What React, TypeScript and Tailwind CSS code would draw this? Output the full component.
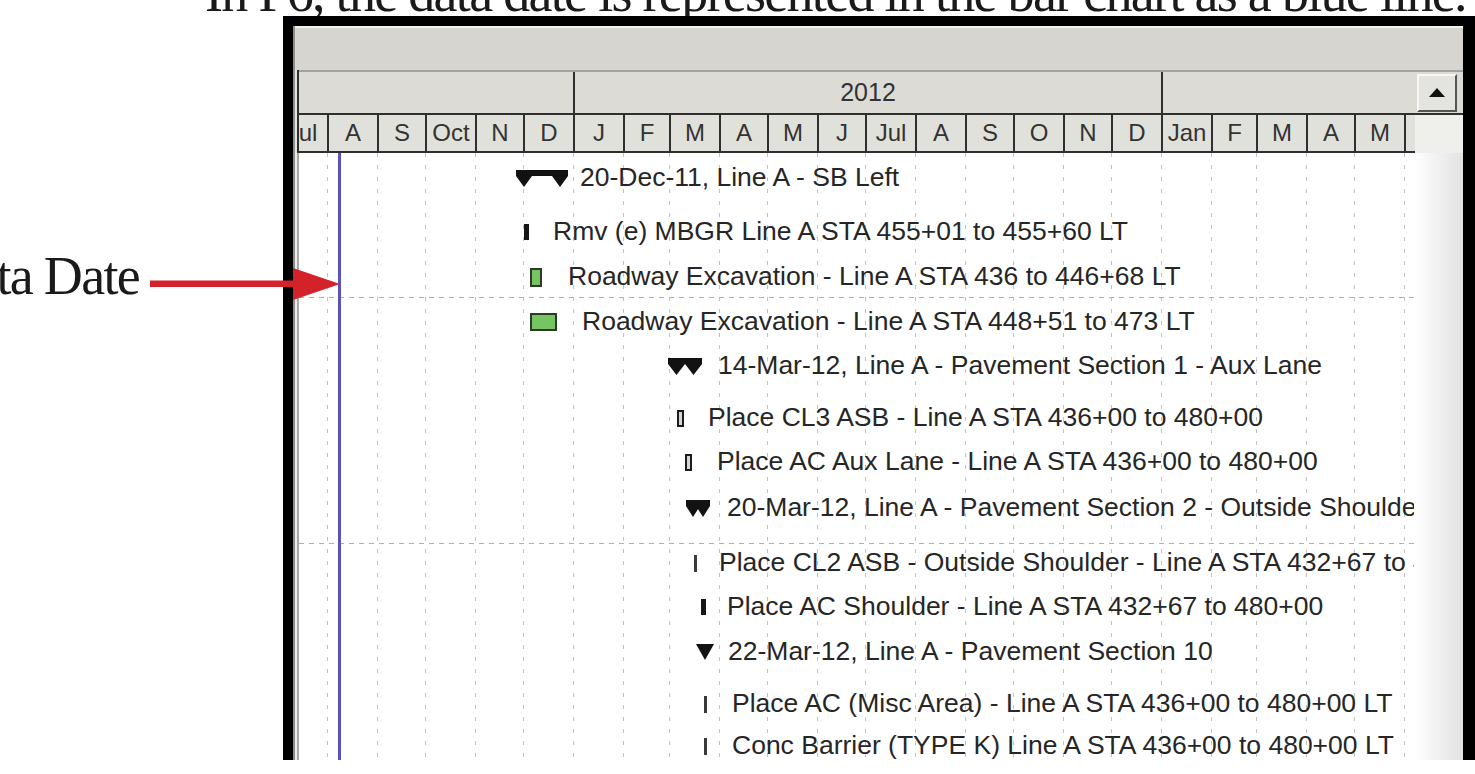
import React from "react";

// timescale: one day in pixels (Jan 1 2012 -> Jan 1 2013 spans 588px)
const DAY = 588 / 366;

const MONTHS: [string, number][] = [
  ["Jul", 31], ["A", 31], ["S", 30], ["Oct", 31], ["N", 30], ["D", 31],
  ["J", 31], ["F", 29], ["M", 31], ["A", 30], ["M", 31], ["J", 30],
  ["Jul", 31], ["A", 31], ["S", 30], ["O", 31], ["N", 30], ["D", 31],
  ["Jan", 31], ["F", 28], ["M", 31], ["A", 30], ["M", 31],
];

// chart-relative month edges, the first month (Jul 11) only shows its tail
const edges: number[] = [0];
let acc = 30.2;
edges.push(Math.round(acc));
for (let i = 1; i < MONTHS.length; i++) {
  acc += MONTHS[i][1] * DAY;
  edges.push(Math.round(acc));
}

const CHART_LEFT = 299;

type Kind = "summary" | "tri" | "bar" | "outline" | "green" | "thin";

interface Row {
  x: number;
  w: number;
  t?: number;
  h?: number;
  kind: Kind;
  tx: number;
  mt: string;
  text: string;
}

const ROWS: Row[] = [
  { x: 516, w: 52, t: 16, kind: "summary", tx: 580, mt: "mt-[4px]", text: "20-Dec-11, Line A - SB Left" },
  { x: 524, w: 5, kind: "bar", tx: 553, mt: "mt-[12px]", text: "Rmv (e) MBGR Line A STA 455+01 to 455+60 LT" },
  { x: 530, w: 12, h: 19, kind: "green", tx: 568, mt: "mt-[3px]", text: "Roadway Excavation - Line A STA 436 to 446+68 LT" },
  { x: 530, w: 27, h: 18, kind: "green", tx: 582, mt: "mt-[3px]", text: "Roadway Excavation - Line A STA 448+51 to 473 LT" },
  { x: 668, w: 34, t: 17, kind: "summary", tx: 718, mt: "mt-[2px]", text: "14-Mar-12, Line A - Pavement Section 1 - Aux Lane" },
  { x: 677, w: 7, kind: "outline", tx: 708, mt: "mt-[10px]", text: "Place CL3 ASB - Line A STA 436+00 to 480+00" },
  { x: 685, w: 7, kind: "outline", tx: 717, mt: "mt-[2px]", text: "Place AC Aux Lane - Line A STA 436+00 to 480+00" },
  { x: 686, w: 24, t: 14, kind: "summary", tx: 727, mt: "mt-[4px]", text: "20-Mar-12, Line A - Pavement Section 2 - Outside Shoulder" },
  { x: 694, w: 3, kind: "thin", tx: 719, mt: "mt-[13px]", text: "Place CL2 ASB - Outside Shoulder - Line A STA 432+67 to 480+00" },
  { x: 701, w: 5, kind: "bar", tx: 727, mt: "mt-[2px]", text: "Place AC Shoulder - Line A STA 432+67 to 480+00" },
  { x: 696, w: 18, kind: "tri", tx: 728, mt: "mt-[3px]", text: "22-Mar-12, Line A - Pavement Section 10" },
  { x: 704, w: 3, kind: "thin", tx: 732, mt: "mt-[10px]", text: "Place AC (Misc Area) - Line A STA 436+00 to 480+00 LT" },
  { x: 704, w: 3, kind: "thin", tx: 732, mt: "mt-0", text: "Conc Barrier (TYPE K) Line A STA 436+00 to 480+00 LT" },
];

function BarIcon({ row }: { row: Row }) {
  const left = row.x - CHART_LEFT;
  if (row.kind === "summary") {
    const w = row.w;
    const t = row.t ?? 16;
    const h = 17;
    const b = 6;
    const pts = `0,0 ${w},0 ${w},${b} ${w - t / 2},${h} ${w - t},${b} ${t},${b} ${t / 2},${h} 0,${b}`;
    return (
      <svg width={w} height={h} className="shrink-0" style={{ marginLeft: left }}>
        <polygon points={pts} fill="#121212" />
      </svg>
    );
  }
  if (row.kind === "tri") {
    return (
      <svg width={row.w} height={16} className="shrink-0" style={{ marginLeft: left }}>
        <polygon points={`0,0 ${row.w},0 ${row.w / 2},16`} fill="#121212" />
      </svg>
    );
  }
  if (row.kind === "green") {
    return (
      <div
        className="shrink-0 border-2 border-[#2c3b28] bg-[#76c562]"
        style={{ marginLeft: left, width: row.w, height: row.h }}
      />
    );
  }
  if (row.kind === "outline") {
    return (
      <div
        className="h-[17px] shrink-0 border-2 border-[#1c1c1c] bg-[#d6d6d6]"
        style={{ marginLeft: left, width: row.w }}
      />
    );
  }
  if (row.kind === "thin") {
    return <div className="h-[17px] shrink-0 bg-[#3a3a3a]" style={{ marginLeft: left, width: row.w }} />;
  }
  return <div className="h-[16px] shrink-0 bg-[#161616]" style={{ marginLeft: left, width: row.w }} />;
}

function Header() {
  return (
    <div className="ml-[2px] flex flex-col border-l-2 border-[#2f2f2f]">
      {/* years */}
      <div className="flex h-[43px] border-t-2 border-[#a2a29e] bg-[#dcdbd5]">
        <div className="w-[276px] shrink-0 border-r-2 border-[#2f2f2f]" />
        <div className="flex w-[588px] shrink-0 items-center justify-center border-r-2 border-[#2f2f2f] text-[25px] text-[#333]">
          2012
        </div>
        <div className="flex-1" />
        <div className="flex h-[38px] w-[40px] shrink-0 items-center justify-center self-center border-2 border-t-[#f7f7f4] border-l-[#f7f7f4] border-r-[#555] border-b-[#555] bg-[#e3e3df]">
          <svg width="16" height="9">
            <polygon points="0,9 8,0 16,9" fill="#111" />
          </svg>
        </div>
        <div className="w-[6px] shrink-0" />
      </div>

      {/* months */}
      <div className="flex h-[40px] border-t-2 border-[#2f2f2f] bg-[#efefec]">
        <div className="flex h-full border-b-2 border-[#2f2f2f] bg-[#e1e1db]">
          {MONTHS.map(([label], i) => {
            const w = edges[i + 1] - edges[i];
            if (i === 0) {
              return (
                <div
                  key={i}
                  className="flex shrink-0 items-center justify-end overflow-hidden border-r-2 border-[#2f2f2f]"
                  style={{ width: w }}
                >
                  <span className="w-[50px] shrink-0 text-center text-[24px] text-[#333]">{label}</span>
                </div>
              );
            }
            return (
              <div
                key={i}
                className="flex shrink-0 items-center justify-center border-r-2 border-[#2f2f2f] text-[24px] text-[#333]"
                style={{ width: w }}
              >
                {label}
              </div>
            );
          })}
          <div className="w-[9px] shrink-0" />
        </div>
      </div>
    </div>
  );
}

function Chart() {
  return (
    <div className="flex h-[607px]">
      <div className="w-[2px] shrink-0 bg-[#ececec]" />
      <div className="relative w-[1117px] shrink-0 overflow-hidden border-l-2 border-[#a8a8a8] bg-white">
        <svg className="absolute inset-0 h-full w-full">
          {edges.slice(1).map((e, i) => (
            <line key={i} x1={e - 1.5} x2={e - 1.5} y1={0} y2={607} stroke="#c2c2c2" strokeDasharray="4 8" />
          ))}
          <line x1={0} x2={1115} y1={144.5} y2={144.5} stroke="#b0b0b0" strokeDasharray="5 5" />
          <line x1={0} x2={1115} y1={390.5} y2={390.5} stroke="#b0b0b0" strokeDasharray="5 5" />
          <rect x={39} y={0} width={3} height={607} fill="#5b52c2" />
        </svg>

        <div className="relative flex flex-col">
          {ROWS.map((r, i) => (
            <div key={i} className={`flex h-[42px] items-center whitespace-nowrap ${r.mt}`}>
              <BarIcon row={r} />
              <span
                className="shrink-0 text-[26.5px] text-[#262626]"
                style={{ marginLeft: r.tx - r.x - r.w }}
              >
                {r.text}
              </span>
            </div>
          ))}
        </div>
      </div>
      <div className="flex-1 bg-linear-to-r from-white via-[#f0f0f0] to-[#e2e2e2]" />
    </div>
  );
}

export default function App() {
  return (
    <div className="relative h-[774px] w-full overflow-hidden bg-white font-['Liberation_Sans',Arial,sans-serif]">
      {/* caption, only its lower edge is in view */}
      <div className="flex h-[16px] items-start overflow-hidden pl-[205px]">
        <span className="-mt-[34px] shrink-0 whitespace-nowrap font-['Liberation_Serif','Times_New_Roman',serif] text-[54px] leading-none tracking-[-1.7px] text-[#1a1a1a]">
          In P6, the data date is represented in the bar chart as a blue line.
        </span>
      </div>

      <div className="flex">
        <div className="flex w-[283px] shrink-0 justify-end overflow-hidden pr-[144px]">
          <span className="mt-[233px] shrink-0 whitespace-nowrap font-['Liberation_Serif','Times_New_Roman',serif] text-[54px] leading-none tracking-[-1.7px] text-[#1a1a1a]">
            Data Date
          </span>
        </div>

        {/* screenshot frame */}
        <div className="flex h-[744px] w-[1192px] shrink-0 flex-col border-t-[10px] border-r-[12px] border-l-[10px] border-black">
          <div className="flex flex-1 flex-col border-l-2 border-[#8e8e8e] bg-[#e4e4e0]">
            <div className="h-[44px] shrink-0 border-t-2 border-[#f1f1ec] bg-[#d6d5cf]" />
            <Header />
            <Chart />
          </div>
        </div>
      </div>

      {/* red arrow pointing at the data date line */}
      <svg className="absolute left-[150px] top-[266px]" width="192" height="36">
        <rect x={0} y={14.5} width={146} height={6.5} fill="#d3222a" />
        <polygon points="143,2 190,18 143,34" fill="#d3222a" />
      </svg>
    </div>
  );
}
